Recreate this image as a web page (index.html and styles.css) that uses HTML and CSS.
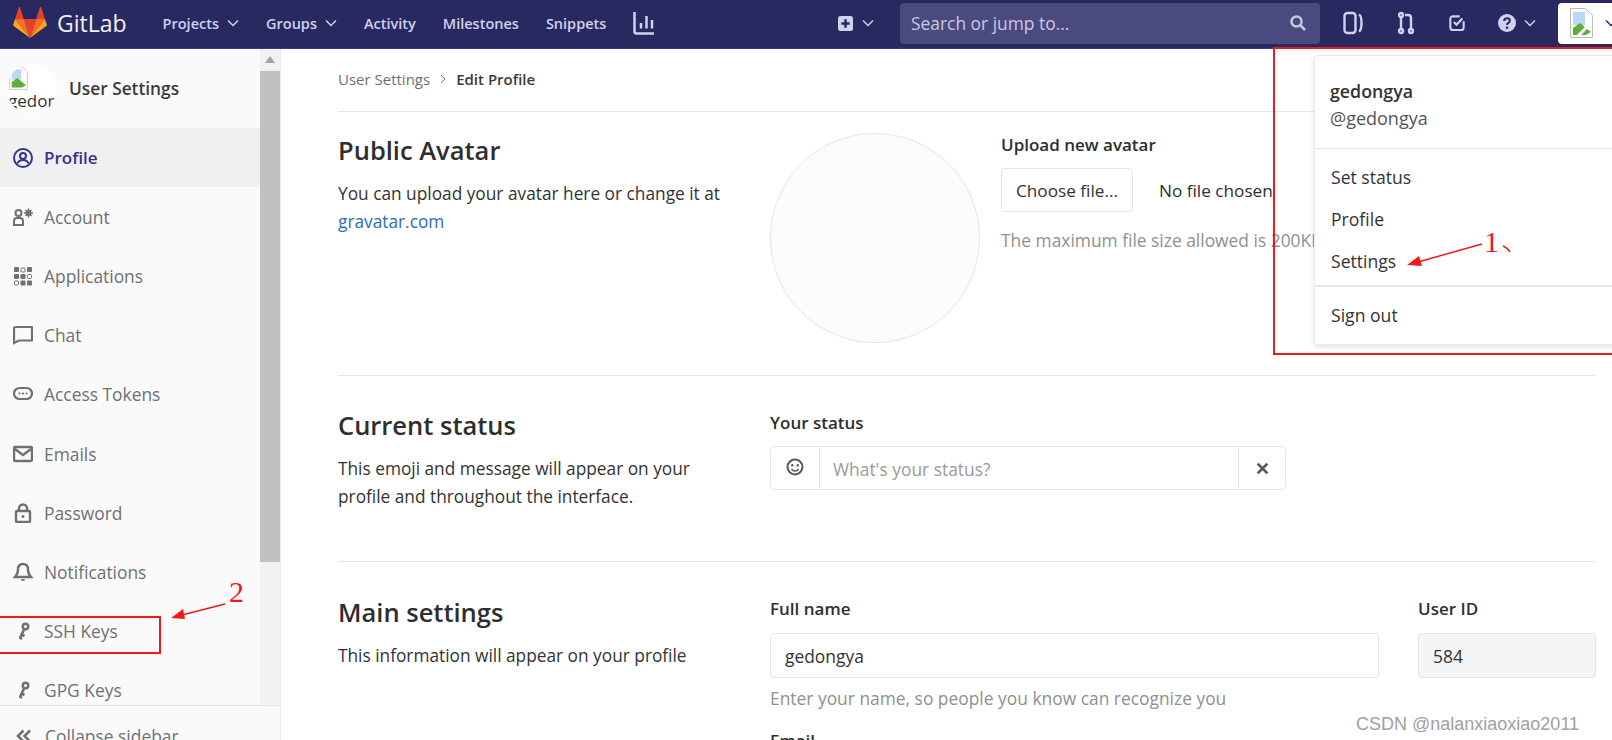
FILE: index.html
```html
<!DOCTYPE html>
<html lang="en">
<head>
  <meta charset="UTF-8" />
  <title>Edit Profile | User Settings | GitLab</title>
  <link rel="stylesheet" href="styles.css">
</head>
<body>
  <header class="navbar">
    <svg class="logo" viewBox="0 0 36 34"><path fill="#e24329" d="M18 33 24.6 12.7H11.4Z"/><path fill="#fc6d26" d="M18 33 11.4 12.7H2.1Z"/><path fill="#fca326" d="M2.1 12.7.2 18.6c-.2.6 0 1.200.5 1.500L18 33Z"/><path fill="#e24329" d="M2.100 12.700h9.300L7.400.500c-.2-.6-1.100-.6-1.300 0Z"/><path fill="#fc6d26" d="M18 33 24.600 12.700h9.300Z"/><path fill="#fca326" d="M33.900 12.700l1.900 5.900c.2.600 0 1.200-.5 1.500L18 33Z"/><path fill="#e24329" d="M33.900 12.700h-9.300L28.600.500c.2-.6 1.100-.6 1.300 0Z"/></svg>
    <span class="brand">GitLab</span>
    <nav class="nav-links">
      <a>Projects <svg class="chev" viewBox="0 0 12 8"><path d="M1 1.500 6 6.500 11 1.500"/></svg></a>
      <a>Groups <svg class="chev" viewBox="0 0 12 8"><path d="M1 1.500 6 6.500 11 1.500"/></svg></a>
      <a>Activity</a>
      <a>Milestones</a>
      <a>Snippets</a>
      <svg class="chart" viewBox="0 0 22 24"><path d="M1.500 1v19.500a2 2 0 0 0 2 2H21M8 12v5.500M13.500 5v12.500M19 9v8.500"/></svg>
    </nav>
    <div class="nav-right">
      <svg class="plus" viewBox="0 0 18 18"><rect width="18" height="18" rx="3" fill="#d1d1f0"/><path d="M9 4v10M4 9h10" stroke="#292961" stroke-width="3"/></svg>
      <svg class="chev plus-chev" viewBox="0 0 12 8"><path d="M1 1.500 6 6.500 11 1.500"/></svg>
      <div class="search">
        <span>Search or jump to...</span>
        <svg viewBox="0 0 16 16"><circle cx="6.500" cy="6.500" r="5" /><path d="M10.500 10.500 15 15"/></svg>
      </div>
      <svg class="nav-icon" viewBox="0 0 20 24"><rect x="1.500" y="2" width="11" height="20" rx="3"/><path d="M16 3.500c2 1 2.500 4 2.500 8.500s-.5 7.500-2.500 8.500"/></svg>
      <svg class="nav-icon mr" viewBox="0 0 16 24"><circle cx="3" cy="4" r="2"/><circle cx="3" cy="20" r="2"/><circle cx="13" cy="20" r="2"/><path d="M3 6v12M13 18V7c0-2-1-3-3-3H7"/></svg>
      <svg class="nav-icon todo" viewBox="0 0 18 18"><path d="M16.500 7v7a3 3 0 0 1-3 3h-9a3 3 0 0 1-3-3V4.500a3 3 0 0 1 3-3H12M5.500 8 8.500 11 15 4"/></svg>
      <svg class="help" viewBox="0 0 18 18"><circle cx="9" cy="9" r="9" fill="#d1d1f0"/><path d="M6.200 7c0-1.700 1.200-2.700 2.900-2.700s2.800 1 2.800 2.400c0 2.200-2.900 2.200-2.900 4.200" fill="none" stroke="#292961" stroke-width="2"/><circle cx="9" cy="13.800" r="1.300" fill="#292961"/></svg>
      <svg class="chev" viewBox="0 0 12 8"><path d="M1 1.500 6 6.500 11 1.500"/></svg>
      <div class="user-btn">
        <svg class="broken" viewBox="0 0 23 30"><path fill="#fff" stroke="#bbb" d="M.5.500h15l7 7v22H.5Z"/><path fill="#bcd6f5" d="M3 4h12v13H3Z"/><path fill="#5fae3c" d="M3 24v-4l7-5 6 5 5 4-5 3H3Z"/><path stroke="#fff" stroke-width="3" d="M8 28 21 15"/></svg>
        <svg class="chev user-chev" viewBox="0 0 12 8"><path d="M1 1.500 6 6.500 11 1.500"/></svg>
      </div>
    </div>
  </header>

  <div class="layout">
    <aside class="sidebar">
      <div class="side-body">
        <div class="side-col">
          <div class="side-head">
            <div class="side-avatar">
              <svg class="broken-sm" viewBox="0 0 23 30"><path fill="#fff" stroke="#bbb" d="M.5.500h15l7 7v22H.5Z"/><path fill="#bcd6f5" d="M3 4h12v13H3Z"/><path fill="#5fae3c" d="M3 24v-4l7-5 6 5 5 4-5 3H3Z"/></svg>
              <span>gedor</span>
            </div>
            <span class="side-title">User Settings</span>
          </div>
          <ul class="side-list">
            <li class="active"><svg viewBox="0 0 20 20"><circle cx="10" cy="10" r="9" fill="none" stroke="currentColor" stroke-width="2"/><circle cx="10" cy="8" r="3" fill="none" stroke="currentColor" stroke-width="2"/><path d="M4.500 15.500c1-2.500 3-3.500 5.500-3.500s4.500 1 5.500 3.500" fill="none" stroke="currentColor" stroke-width="2"/></svg>Profile</li>
            <li><svg viewBox="0 0 20 20"><circle cx="5.500" cy="6" r="3" fill="none" stroke="currentColor" stroke-width="2"/><path d="M1 17v-3c0-2 1-3 3-3h3c2 0 3 1 3 3v4H1Z" fill="none" stroke="currentColor" stroke-width="2"/><circle cx="15.500" cy="6" r="3" fill="currentColor"/><path d="M15.500 1.500v9M11 6h9M12.500 3l6 6M18.500 3l-6 6" stroke="currentColor" stroke-width="1.500"/></svg>Account</li>
            <li><svg viewBox="0 0 20 20" fill="currentColor"><rect x="1" y="1" width="5" height="5" rx="1"/><rect x="8" y="2" width="4" height="4" rx="1" fill="none" stroke="currentColor"/><rect x="14" y="1" width="5" height="5" rx="1"/><rect x="1" y="8" width="5" height="5" rx="1"/><rect x="7.500" y="8" width="5" height="5" rx="1"/><rect x="14.500" y="8.500" width="4" height="4" rx="1" fill="none" stroke="currentColor"/><rect x="1.500" y="15" width="4" height="4" rx="1" fill="none" stroke="currentColor"/><rect x="7.500" y="14.500" width="5" height="5" rx="1"/><rect x="14" y="14.500" width="5" height="5" rx="1"/></svg>Applications</li>
            <li><svg viewBox="0 0 20 20"><path d="M2.500 2h16a.5.500 0 0 1 .5.500V15a.5.500 0 0 1-.5.500H6L1 18V3.500A1.500 1.500 0 0 1 2.500 2Z" fill="none" stroke="currentColor" stroke-width="2.200"/></svg>Chat</li>
            <li><svg viewBox="0 0 20 20"><rect x="1" y="4" width="18" height="11" rx="5.500" fill="none" stroke="currentColor" stroke-width="2.200"/><circle cx="6.500" cy="9.500" r="1.100" fill="currentColor"/><circle cx="10" cy="9.500" r="1.100" fill="currentColor"/><circle cx="13.500" cy="9.500" r="1.100" fill="currentColor"/></svg>Access Tokens</li>
            <li><svg viewBox="0 0 20 20"><rect x="1" y="3" width="18" height="14" rx="1.500" fill="none" stroke="currentColor" stroke-width="2.400"/><path d="M2 5l8 6 8-6" fill="none" stroke="currentColor" stroke-width="2.400"/></svg>Emails</li>
            <li><svg viewBox="0 0 20 20"><rect x="3" y="8" width="14" height="11" rx="1" fill="none" stroke="currentColor" stroke-width="2.400"/><path d="M6 8V5.500a4 4 0 0 1 8 0V8" fill="none" stroke="currentColor" stroke-width="2.400"/><circle cx="10" cy="13.500" r="1.500" fill="currentColor"/></svg>Password</li>
            <li><svg viewBox="0 0 20 20"><path d="M10 2c3.500 0 5 2.500 5 5.500 0 4 1 5.500 3 7.500H2c2-2 3-3.500 3-7.500C5 4.500 6.500 2 10 2Z" fill="none" stroke="currentColor" stroke-width="2.400"/><path d="M8 17h4a2 2 0 0 1-4 0Z" fill="currentColor"/></svg>Notifications</li>
            <li><svg viewBox="0 0 20 20"><circle cx="12.500" cy="5.500" r="2.800" fill="none" stroke="currentColor" stroke-width="2.400"/><path d="M11 8.500 7 17M8.500 13.500l3 1.500M6.500 16.500l2.500 1.500" fill="none" stroke="currentColor" stroke-width="2.600"/></svg>SSH Keys</li>
            <li><svg viewBox="0 0 20 20"><circle cx="12.500" cy="5.500" r="2.800" fill="none" stroke="currentColor" stroke-width="2.400"/><path d="M11 8.500 7 17M8.500 13.500l3 1.500M6.500 16.500l2.500 1.500" fill="none" stroke="currentColor" stroke-width="2.600"/></svg>GPG Keys</li>
          </ul>
        </div>
        <div class="scrollbar">
          <div class="scroll-up"></div>
          <div class="scroll-thumb"></div>
        </div>
      </div>
      <div class="collapse">
        <svg viewBox="0 0 16 14"><path d="M7.500 1.500 2 7l5.500 5.500M14 1.500 8.500 7l5.500 5.500"/></svg>
        Collapse sidebar
      </div>
    </aside>

    <main class="content">
      <div class="crumbs">
        <span class="crumb-parent">User Settings</span>
        <svg viewBox="0 0 6 10"><path d="M1 1l4 4-4 4"/></svg>
        <span class="crumb-current">Edit Profile</span>
      </div>

      <section class="row row-avatar">
        <div>
          <h2>Public Avatar</h2>
          <p>You can upload your avatar here or change it at <a>gravatar.com</a></p>
        </div>
        <div class="avatar-area">
          <div class="avatar-big"></div>
          <div class="upload">
            <label>Upload new avatar</label>
            <div class="file-row">
              <button>Choose file...</button>
              <span>No file chosen</span>
            </div>
            <div class="help-text">The maximum file size allowed is 200KB.</div>
          </div>
        </div>
      </section>

      <section class="row row-status">
        <div>
          <h2>Current status</h2>
          <p>This emoji and message will appear on your profile and throughout the interface.</p>
        </div>
        <div class="field-col">
          <label>Your status</label>
          <div class="status-group">
            <div class="addon addon-left"><svg viewBox="0 0 18 18"><circle cx="9" cy="9" r="7.500" fill="none" stroke="currentColor" stroke-width="2"/><circle cx="6.300" cy="7.300" r="1.200" fill="currentColor"/><circle cx="11.700" cy="7.300" r="1.200" fill="currentColor"/><path d="M5.500 11c1 1.500 2.200 2 3.500 2s2.500-.5 3.500-2" fill="none" stroke="currentColor" stroke-width="1.500"/></svg></div>
            <div class="status-text">What's your status?</div>
            <div class="addon addon-right"><svg viewBox="0 0 12 12"><path d="M1.500 1.500l9 9M10.500 1.500l-9 9" stroke="currentColor" stroke-width="2.600"/></svg></div>
          </div>
        </div>
      </section>

      <section class="row row-main">
        <div>
          <h2>Main settings</h2>
          <p>This information will appear on your profile</p>
        </div>
        <div class="field-col">
          <div class="name-grid">
            <div>
              <label>Full name</label>
              <div class="text-box">gedongya</div>
              <div class="help-text">Enter your name, so people you know can recognize you</div>
            </div>
            <div>
              <label>User ID</label>
              <div class="text-box readonly">584</div>
            </div>
          </div>
          <label class="email-label">Email</label>
        </div>
      </section>
    </main>
  </div>

  <div class="dropdown">
    <div class="drop-user">
      <strong>gedongya</strong>
      <span>@gedongya</span>
    </div>
    <ul>
      <li>Set status</li>
      <li>Profile</li>
      <li>Settings</li>
    </ul>
    <div class="drop-out">Sign out</div>
  </div>

  <!-- red marks drawn on top of the screenshot -->
  <div class="mark mark-menu"></div>
  <div class="mark mark-ssh"></div>
  <svg class="arrows" viewBox="0 0 1612 740">
    <path d="M1482 244 1418 262M225 604 182 615" stroke="#f01818" stroke-width="1.500" fill="none"/>
    <path d="M1407 265 1419 256 1422 266ZM171 618 183 609 185 619Z" fill="#f01818"/>
    <path d="M1503 246c3 1 5 3 7 6" stroke="#f01818" stroke-width="1.500" fill="none"/>
  </svg>
  <span class="mark-num num-one">1</span>
  <span class="mark-num num-two">2</span>
  <span class="watermark">CSDN @nalanxiaoxiao2011</span>
</body>
</html>
```

FILE: styles.css
```css
* { box-sizing: border-box; }
html, body { margin: 0; height: 740px; overflow: hidden; }
body { position: relative; font-family: "Open Sans", sans-serif; font-size: 17.400px; color: #2e2e2e; background: #fff; }
ul { list-style: none; margin: 0; padding: 0; }

/* Top bar */
.navbar { display: flex; align-items: center; height: 49px; padding: 0 0 2px 13px; background: #292961; color: #d1d1f0; border-bottom: 1px solid #3b3b78; }
.logo { width: 34px; height: 32px; }
.brand { margin-left: 10px; font-size: 23px; color: #f0f0fa; }
.nav-links { display: flex; align-items: center; gap: 27px; margin-left: 36px; font-size: 14.500px; font-weight: 600; }
.nav-links a { display: flex; align-items: center; gap: 8px; }
.chev { width: 12px; height: 8px; fill: none; stroke: #d1d1f0; stroke-width: 1.500; }
.chart { width: 22px; height: 24px; fill: none; stroke: #d1d1f0; stroke-width: 2.500; }
.nav-right { display: flex; align-items: center; margin-left: auto; height: 100%; }
.plus { width: 17px; height: 15px; }
.plus-chev { margin-left: 8px; }
.search { display: flex; align-items: center; justify-content: space-between; width: 420px; height: 41px; margin-left: 26px; padding: 0 14px 0 11px; background: #4a4a7e; border-radius: 4px; color: #c8c8e6; font-size: 17.400px; }
.search svg { width: 16px; height: 16px; fill: none; stroke: #c8c8e6; stroke-width: 2.500; }
.nav-icon { width: 20px; height: 24px; margin-left: 23px; fill: none; stroke: #d1d1f0; stroke-width: 2.400; }
.mr { width: 16px; margin-left: 35px; }
.todo { width: 16px; height: 16px; margin-left: 35px; }
.help { width: 18px; height: 18px; margin: 0 8px 0 33px; }
.user-btn { display: flex; align-items: center; width: 54px; height: 41px; margin-left: 22px; padding-left: 12px; background: #fff; border-radius: 4px 0 0 4px; }
.broken { width: 23px; height: 30px; flex: none; }
.user-chev { flex: none; margin-left: 12px; stroke: #292961; }

/* Sidebar */
.layout { display: flex; height: 691px; }
.sidebar { display: flex; flex-direction: column; flex: none; width: 281px; background: #fafafa; border-right: 1px solid #ececec; }
.side-body { display: flex; height: 656px; }
.side-col { flex: 1; overflow: hidden; }
.side-head { display: flex; align-items: center; gap: 12px; height: 79px; padding: 0 0 0 7px; }
.side-avatar { position: relative; flex: none; width: 50px; height: 50px; border-radius: 50%; background: #fff; overflow: hidden; font-size: 17px; line-height: 20px; }
.side-avatar span { display: block; position: absolute; left: 1px; top: 27px; width: 49px; overflow: hidden; white-space: nowrap; color: #333; }
.broken-sm { position: absolute; left: 2px; top: 2px; width: 19px; height: 24px; }
.side-title { font-size: 17.300px; font-weight: 600; color: #3a3a3a; }
.side-list li { display: flex; align-items: center; gap: 11px; height: 59.200px; padding-left: 13px; color: #707070; font-size: 17.400px; }
.side-list svg { flex: none; width: 20px; height: 20px; }
.side-list li.active { background: #f0f0f0; color: #33338a; font-weight: 600; font-size: 17px; }
.scrollbar { flex: none; width: 20px; background: #f1f1f1; }
.scroll-up { height: 22px; position: relative; }
.scroll-up::after { content: ""; position: absolute; left: 5px; top: 7px; border: 5px solid transparent; border-top: 0; border-bottom: 7px solid #a3a3a3; }
.scroll-thumb { height: 491px; background: #c1c1c1; }
.collapse { display: flex; align-items: center; gap: 13px; height: 35px; padding: 26px 0 0 16px; border-top: 1px solid #e5e5e5; color: #707070; font-size: 17.400px; white-space: nowrap; }
.collapse svg { flex: none; width: 16px; height: 14px; fill: none; stroke: #707070; stroke-width: 2.500; }

/* Main column */
.content { flex: 1; min-width: 0; padding: 0 16px 0 57px; overflow: hidden; }
.crumbs { display: flex; align-items: center; gap: 10px; height: 63px; padding-bottom: 2px; border-bottom: 1px solid #e5e5e5; font-size: 15px; }
.crumbs svg { width: 6px; height: 10px; fill: none; stroke: #707070; }
.crumb-parent { color: #707070; }
.crumb-current { font-weight: 600; color: #3a3a3a; }

.row { display: grid; grid-template-columns: 432px 1fr; border-bottom: 1px solid #e5e5e5; }
.row h2 { margin: 0 0 14px; font-size: 25.500px; line-height: 32px; font-weight: 600; color: #2e2e2e; }
.row p { margin: 0; width: 392px; font-size: 17.300px; line-height: 28px; color: #333; }
.row a { color: #2f6db5; }
label { display: block; font-size: 17px; line-height: 20px; font-weight: 600; color: #2e2e2e; }
.help-text { font-size: 17.400px; color: #909090; white-space: nowrap; }

.row-avatar { height: 264px; padding-top: 22px; }
.avatar-area { display: flex; gap: 21px; margin-top: -1px; }
.avatar-big { flex: none; width: 210px; height: 210px; border-radius: 50%; background: #fcfcfc; border: 1px solid #e5e5e5; }
.upload label { margin-top: 2px; }
.file-row { display: flex; align-items: center; gap: 26px; margin: 13px 0 16px; font-size: 17.200px; }
.file-row button { width: 132px; height: 44px; padding: 0; background: #fff; border: 1px solid #e5e5e5; border-radius: 4px; color: #333; font: inherit; }

.row-status { height: 186px; padding-top: 33px; }
.field-col { padding-top: 4px; }
.status-group { display: flex; width: 516px; height: 44px; margin-top: 13px; border: 1px solid #e5e5e5; border-radius: 4px; font-size: 17.400px; }
.addon { display: flex; align-items: center; justify-content: center; color: #5a5a5a; }
.addon-left { width: 49px; border-right: 1px solid #e5e5e5; }
.addon-left svg { width: 18px; height: 18px; margin-bottom: 3px; }
.addon-right { width: 47px; border-left: 1px solid #e5e5e5; }
.addon-right svg { width: 13px; height: 13px; }
.status-text { flex: 1; padding: 2px 13px 0; line-height: 41px; color: #9a9a9a; }

.row-main { padding-top: 34px; border-bottom: 0; }
.row-main .field-col { padding-top: 3px; }
.name-grid { display: grid; grid-template-columns: 609px 178px; gap: 39px; }
.text-box { height: 45px; margin: 14px 0 8px; padding: 1px 13px 0 14px; line-height: 43px; border: 1px solid #e5e5e5; border-radius: 4px; font-size: 17.400px; color: #333; }
.text-box.readonly { background: #f5f5f5; }
.email-label { margin-top: 21px; }

/* User menu */
.dropdown { position: absolute; left: 1314px; top: 55px; width: 320px; height: 290px; background: #fff; border: 1px solid #ededed; border-radius: 4px; box-shadow: 0 2px 5px rgba(0,0,0,.12); font-size: 17.600px; color: #333; }
.drop-user { display: flex; flex-direction: column; height: 93px; padding: 22px 0 0 15px; border-bottom: 1px solid #e5e5e5; font-size: 18px; line-height: 27px; }
.drop-user strong { font-weight: 600; font-size: 17.800px; }
.drop-user span { color: #555; }
.dropdown ul { height: 138px; padding-top: 7px; border-bottom: 2px solid #e5e5e5; }
.dropdown li { height: 42px; padding-left: 16px; line-height: 42px; }
.drop-out { padding-left: 16px; line-height: 56px; }

/* Annotations */
.mark { position: absolute; border: 2px solid #f01818; }
.mark-menu { left: 1273px; top: 47px; width: 360px; height: 308px; }
.mark-ssh { left: -3px; top: 616px; width: 164px; height: 38px; }
.arrows { position: absolute; left: 0; top: 0; width: 1612px; height: 740px; pointer-events: none; }
.mark-num { position: absolute; font-family: "Liberation Serif", serif; font-size: 30px; line-height: 30px; color: #f01818; }
.num-one { left: 1484px; top: 227px; }
.num-two { left: 229px; top: 577px; }
.watermark { position: absolute; left: 1356px; top: 713px; font-family: "Liberation Sans", sans-serif; font-size: 18px; line-height: 22px; white-space: nowrap; color: #a0a0a0; }
```
